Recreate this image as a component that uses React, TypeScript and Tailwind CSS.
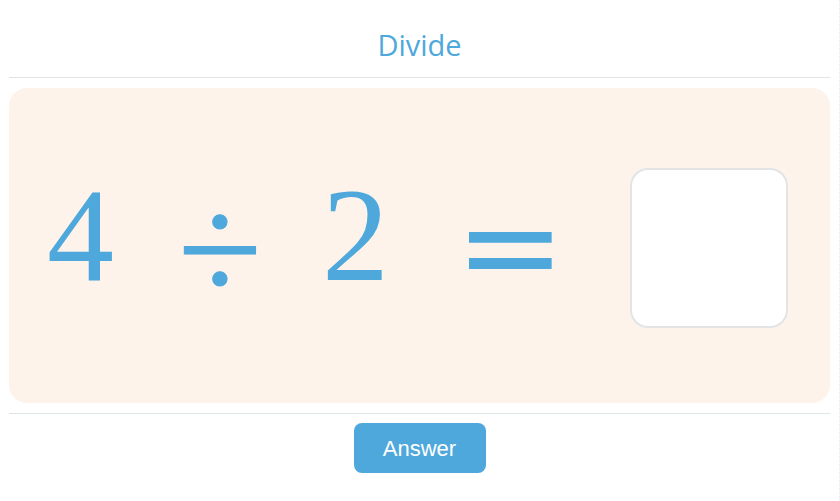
import React from "react";

/* ── Equation row ── */
function Digit({
  children,
  className = "",
}: {
  children: React.ReactNode;
  className?: string;
}) {
  return (
    <span
      className={`mb-[22px] leading-none text-[#4ea8dc] text-[134px] font-['Liberation_Serif','Times_New_Roman',serif] ${className}`}
    >
      {children}
    </span>
  );
}

export default function App() {
  return (
    <div className="w-[840px] h-[501px] bg-white border-r border-dotted border-gray-200 flex flex-col">
      {/* Header */}
      <div className="h-[77px] flex items-center justify-center pt-[13px]">
        <h1 className="text-[29px] text-[#4ea8dc] font-['Open_Sans',sans-serif]">
          Divide
        </h1>
      </div>
      <div className="mx-[9px] h-px bg-[#e3e3e3]" />

      {/* Question panel */}
      <div className="mx-[9px] mt-[10px] h-[315px] rounded-[18px] bg-[#fdf3ea] flex items-center pl-[38px]">
        <Digit>4</Digit>
        <span className="ml-[64px] mt-[8px] leading-none text-[#4ea8dc] text-[153px] font-['Liberation_Serif',serif] [-webkit-text-stroke:1px_#4ea8dc]">
          ÷
        </span>
        <Digit className="ml-[60px]">2</Digit>
        <span className="ml-[66px] leading-none text-[#4ea8dc] text-[132px] font-['DejaVu_Sans',sans-serif]">
          =
        </span>
        <div className="ml-[64px] mt-[5px] w-[158px] h-[160px] rounded-[18px] border-2 border-[#e2e4e6] bg-white" />
      </div>

      <div className="mx-[9px] mt-[10px] h-px bg-[#dde6e6]" />

      {/* Footer */}
      <div className="flex justify-center pt-[9px]">
        <button className="w-[132px] h-[50px] rounded-[8px] bg-[#4ea8dc] text-white text-[22px] font-['Liberation_Sans',Arial,sans-serif]">
          Answer
        </button>
      </div>
    </div>
  );
}
